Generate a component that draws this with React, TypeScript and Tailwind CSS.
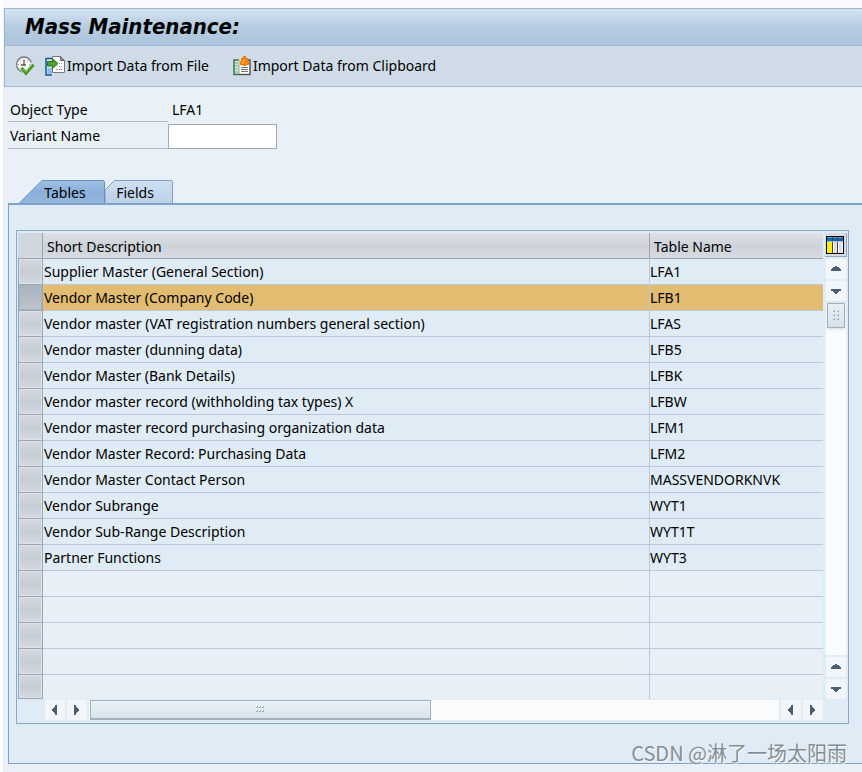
import { ReactNode, useState } from "react";

const tables = [
  { description: "Supplier Master (General Section)", name: "LFA1" },
  { description: "Vendor Master (Company Code)", name: "LFB1" },
  {
    description: "Vendor master (VAT registration numbers general section)",
    name: "LFAS",
  },
  { description: "Vendor master (dunning data)", name: "LFB5" },
  { description: "Vendor Master (Bank Details)", name: "LFBK" },
  { description: "Vendor master record (withholding tax types) X", name: "LFBW" },
  {
    description: "Vendor master record purchasing organization data",
    name: "LFM1",
  },
  { description: "Vendor Master Record: Purchasing Data", name: "LFM2" },
  { description: "Vendor Master Contact Person", name: "MASSVENDORKNVK" },
  { description: "Vendor Subrange", name: "WYT1" },
  { description: "Vendor Sub-Range Description", name: "WYT1T" },
  { description: "Partner Functions", name: "WYT3" },
];

const VISIBLE_ROWS = 17;

const ExecuteIcon = () => (
  <svg width="20" height="20" viewBox="0 0 20 20" fill="none">
    <circle cx="9" cy="8.500" r="7.500" fill="#fafafa" stroke="#777" strokeWidth="1.300" />
    <path d="M9 3.500v6M6 9h5" stroke="#555" strokeWidth="1.300" />
    <path d="M3 8.500h1M14 8.500h1M5 4.500l1 1M13 4.500l-1 1M5 12.500l1-1" stroke="#888" />
    <path d="M7 12.500l4 4.500 7-9" stroke="#e4ecef" strokeWidth="4.500" />
    <path d="M6.500 12l4.500 5.500L18.500 8.500" stroke="#3f8f1d" strokeWidth="3" />
    <path d="M7 12.500l4 4 6.500-8" stroke="#7cc243" strokeWidth="1" />
  </svg>
);

const ImportFileIcon = () => (
  <svg width="20" height="20" viewBox="0 0 20 20" fill="none">
    <path d="M1 3h8v16H1z" fill="#d9e8f4" />
    <path d="M7 2.500H1v16.500h6" stroke="#0a5c94" strokeWidth="1.500" />
    <path d="M2.500 12H7v6H2.500z" fill="#8fbbe0" />
    <path d="M7.500 0.500h8l4 4V16.500H7.500z" fill="#fff" stroke="#777" />
    <path d="M15.500 0.500v4h4z" fill="#999" stroke="#666" />
    <path d="M14 7.500h1M16 7.500h1M14 10.500h1M16 10.500h1M11 13.500h2M14 13.500h3" stroke="#999" />
    <path
      d="M2.500 5.500h5V3L13 7.500 7.500 12.500V10h-5z"
      fill="#4fa02d"
      stroke="#2c741b"
    />
  </svg>
);

const ImportClipboardIcon = () => (
  <svg width="18" height="20" viewBox="0 0 18 20" fill="none">
    <path d="M1 4h5v15H1z" fill="#d5ead6" />
    <path d="M6 4H1v14.500h5" stroke="#34764b" strokeWidth="1.500" />
    <path d="M2 7h3M2 10h3M2 13h3M2 16h3" stroke="#72b184" />
    <path d="M6 4h11v14H6z" fill="#fff" />
    <path d="M15 4h2v14.500H6" stroke="#555" strokeWidth="1.500" />
    <path d="M6 4v14" stroke="#999" />
    <path d="M8 11.500h7M8 13.500h7M8 15.500h7" stroke="#777" />
    <path
      d="M10.500 0.500h2v2h2v3h1v3h-3v1h-2v-1h-3v-3h1v-3h2z"
      fill="#ff8a12"
      stroke="#f07000"
    />
    <path d="M10 4.500h2M9 6.500h2" stroke="#ffc060" />
  </svg>
);

const LayoutIcon = () => (
  <svg width="18" height="18" viewBox="0 0 18 18" shapeRendering="crispEdges">
    <path d="M0 0h18v18H0z" fill="#000" />
    <path d="M1 1h16v16H1z" fill="#fff" />
    <path d="M1 1h16v1H1z" fill="#4aa0d8" />
    <path d="M1 2h16v3H1z" fill="#1764ac" />
    <path d="M1 6h5v11H1z" fill="#ffee00" />
    <path d="M8 6h3v11H8zM13 6h3v11h-3z" fill="#dcdfe8" />
    <path d="M6 1h1v16H6zM11 1h1v16h-1z" fill="#444" />
    <path d="M1 5h16v1H1z" fill="#9fc3e0" />
  </svg>
);

const arrows = {
  up: "M5 3h2v1h2v1h1v1h1v2H1V6h1V5h1V4h2z",
  down: "M1 4h10v2H9v1H8v1H7v1H5V8H4V7H3V6H1z",
  left: "M8 1v10H6V9H5V8H4V7H3V5h1V4h1V3h1V1z",
  right: "M3 1v10h2V9h1V8h1V7h1V5H7V4H6V3H5V1z",
};

const ScrollButton = ({
  direction,
  label,
}: {
  direction: keyof typeof arrows;
  label: string;
}) => (
  <button
    type="button"
    aria-label={label}
    className="flex h-5 w-5 shrink-0 items-center justify-center bg-[#f2f6fb]"
  >
    <svg width="12" height="12" viewBox="0 0 12 12" shapeRendering="crispEdges">
      <path d={arrows[direction]} fill="#4a6072" />
    </svg>
  </button>
);

const Grip = ({ rows }: { rows: number }) => {
  const columns = rows === 3 ? 2 : 3;
  const step = rows === 3 ? 4 : 3;

  return (
    <svg
      width={columns === 2 ? 6 : 9}
      height={rows * 4 - 1}
      shapeRendering="crispEdges"
    >
      {Array.from({ length: rows }).map((_, row) =>
        Array.from({ length: columns }).map((_, col) => (
          <g key={`${row}-${col}`}>
            <rect x={col * step} y={row * 4} width="2" height="2" fill="#9fb0be" />
            <rect x={col * step} y={row * 4} width="1" height="1" fill="#fff" />
          </g>
        ))
      )}
    </svg>
  );
};

const ToolbarButton = ({
  icon,
  children,
}: {
  icon: ReactNode;
  children: ReactNode;
}) => (
  <button type="button" className="flex items-center gap-0.5 whitespace-nowrap">
    {icon}
    {children}
  </button>
);

const TabStrip = () => (
  <div role="tablist" className="ml-[11px] flex h-[23px]">
    <button
      type="button"
      role="tab"
      aria-selected="true"
      className="relative h-[23px] w-[86px] pt-0.5 pl-1.5"
    >
      <svg className="absolute inset-0" width="86" height="23">
        <defs>
          <linearGradient id="activeTab" x1="0" y1="0" x2="0" y2="1">
            <stop offset="0" stopColor="#9dbfe2" />
            <stop offset="0.5" stopColor="#8bb0da" />
            <stop offset="1" stopColor="#93b6dd" />
          </linearGradient>
        </defs>
        <path
          d="M0.500 23L22 1.500Q23 0.500 24 0.500H84.500L85.500 1.500V23"
          fill="url(#activeTab)"
          stroke="#6690bd"
        />
      </svg>
      <span className="relative">Tables</span>
    </button>
    <button
      type="button"
      role="tab"
      aria-selected="false"
      className="relative h-[23px] w-[68px] pt-0.5 pr-2"
    >
      <svg className="absolute inset-0" width="68" height="23">
        <defs>
          <linearGradient id="idleTab" x1="0" y1="0" x2="0" y2="1">
            <stop offset="0" stopColor="#cfe0f0" />
            <stop offset="1" stopColor="#b9d0e8" />
          </linearGradient>
        </defs>
        <path
          d="M0 23V10L9.500 0.500H66.500L67.500 1.500V23"
          fill="url(#idleTab)"
          stroke="#7f9fc4"
        />
      </svg>
      <span className="relative">Fields</span>
    </button>
  </div>
);

const TablesGrid = () => {
  const [selected, setSelected] = useState(1);
  const rows = Array.from({ length: VISIBLE_ROWS }, (_, i) => tables[i]);

  return (
    <div className="border border-[#8aa9cd] px-px pt-0.5 pb-0.5">
      <div className="flex gap-0.5">
        <table className="min-w-0 flex-1 table-fixed border-separate border-spacing-0">
          <colgroup>
            <col className="w-[25px]" />
            <col />
            <col className="w-[173px]" />
          </colgroup>
          <thead>
            <tr className="h-[26px] bg-linear-to-b from-[#dfe2e7] via-[#cdd2d9] to-[#d8dce2] text-left">
              <th className="border-r border-b border-[#9aa5b5] bg-[#d0d7df] p-0" />
              <th className="border-r border-b border-[#9aa5b5] p-0 pt-0.5 pl-1 font-normal">
                Short Description
              </th>
              <th className="border-b border-[#9aa5b5] p-0 pt-0.5 pl-1 font-normal">
                Table Name
              </th>
            </tr>
          </thead>
          <tbody>
            {rows.map((row, i) => {
              const isLast = i === VISIBLE_ROWS - 1;
              return (
                <tr
                  key={i}
                  className={
                    i === selected
                      ? "bg-[#e2bc70]"
                      : row
                        ? "bg-[#dfebf5]"
                        : "bg-[#e8eff7]"
                  }
                >
                  <td className="border-x border-b border-[#9aa5b5] p-0">
                    <button
                      type="button"
                      aria-label={`Select row ${i + 1}`}
                      onClick={() => setSelected(i)}
                      className={
                        i === selected
                          ? "block h-[25px] w-full border border-[#aab4bd] bg-linear-to-b from-[#a9b3bd] to-[#bcc5cd]"
                          : isLast
                            ? "block h-[23px] w-full border border-[#dde2e9] bg-linear-to-b from-[#d3d8df] via-[#c6cdd6] to-[#d3d8df]"
                            : "block h-[25px] w-full border border-[#dde2e9] bg-linear-to-b from-[#d3d8df] via-[#c6cdd6] to-[#d3d8df]"
                      }
                    />
                  </td>
                  <td
                    className={
                      isLast
                        ? "truncate border-r border-[#bcc7d7] p-0 pl-px"
                        : "truncate border-r border-b border-[#bcc7d7] p-0 pl-px"
                    }
                  >
                    {row?.description}
                  </td>
                  <td
                    className={isLast ? "p-0" : "border-b border-[#bcc7d7] p-0"}
                  >
                    {row?.name}
                  </td>
                </tr>
              );
            })}
          </tbody>
        </table>

        <div className="flex w-[22px] flex-col items-center gap-0.5">
          <button
            type="button"
            aria-label="Table settings"
            className="flex h-6 w-full items-center justify-center border-r border-b border-[#9aa5b5] bg-[#d8dce2] pr-px"
          >
            <LayoutIcon />
          </button>
          <ScrollButton direction="up" label="Scroll up" />
          <ScrollButton direction="down" label="Scroll down" />
          <div className="flex w-full flex-1 flex-col items-center border-x border-[#edf2f8] bg-[#fafbfc]">
            <div className="flex h-[25px] w-[18px] items-center justify-center border border-[#a0b0bf] bg-linear-to-b from-[#e9f1f7] to-[#d3e0ea] shadow-sm">
              <Grip rows={3} />
            </div>
          </div>
          <ScrollButton direction="up" label="Previous row" />
          <ScrollButton direction="down" label="Next row" />
        </div>
      </div>

      <div className="mr-6 ml-[27px] flex h-[22px] items-center gap-0.5">
        <ScrollButton direction="left" label="Scroll left" />
        <ScrollButton direction="right" label="Scroll right" />
        <div className="h-5 flex-1 bg-[#fafbfc] pl-px">
          <div className="flex h-5 w-[341px] items-center justify-center border border-b-2 border-[#a0b0bd] bg-linear-to-b from-[#eaf1f7] to-[#d8e4ec]">
            <Grip rows={2} />
          </div>
        </div>
        <ScrollButton direction="left" label="Previous column" />
        <ScrollButton direction="right" label="Next column" />
      </div>
    </div>
  );
};

export default function App() {
  return (
    <div className="relative min-h-screen border-l-[3px] border-white bg-[#e9f0f7] font-['Noto_Sans',sans-serif] text-sm leading-5 text-black">
      <div className="h-2 bg-[#f8f9fd]" />
      <header className="ml-px border-y border-l border-[#9db5cf] bg-linear-to-b from-[#d5e3f0] via-[#b6cce1] to-[#abc3dc] pl-5">
        <h1 className="h-9 font-['DejaVu_Sans_Condensed','DejaVu_Sans',sans-serif] text-[22px] leading-9 font-bold italic">
          Mass Maintenance:
        </h1>
      </header>
      <div className="ml-px flex h-[41px] items-center border-b border-l border-[#9db5cf] bg-[#cfdce8] pl-2.5">
        <button type="button" aria-label="Execute" className="mr-2.5">
          <ExecuteIcon />
        </button>
        <ToolbarButton icon={<ImportFileIcon />}>
          Import Data from File
        </ToolbarButton>
        <div className="w-6" />
        <ToolbarButton icon={<ImportClipboardIcon />}>
          Import Data from Clipboard
        </ToolbarButton>
      </div>

      <div className="ml-[5px] pt-[9px]">
        <div className="flex">
          <span className="h-[26px] w-40 border-b border-[#b4bbc3] pl-0.5 leading-7">
            Object Type
          </span>
          <span className="h-[26px] pl-1 leading-7">LFA1</span>
        </div>
        <div className="flex items-end">
          <label
            htmlFor="variant"
            className="h-[27px] w-40 border-b border-[#b4bbc3] pl-0.5 leading-7"
          >
            Variant Name
          </label>
          <input
            id="variant"
            type="text"
            className="h-[25px] w-[109px] border border-[#a5a9ad] bg-white px-1 outline-none"
          />
        </div>
      </div>

      <main className="mt-[31px] ml-[5px]">
        <TabStrip />
        <section className="border-t-2 border-b border-l border-[#7ea2cb] bg-[#dfebf5] pt-[25px] pr-[13px] pb-[39px] pl-[7px]">
          <TablesGrid />
        </section>
      </main>
      <div className="absolute right-[15px] bottom-[5px] font-['Noto_Sans_CJK_SC',sans-serif] text-xl leading-7 font-normal text-[#868e95] text-shadow-[1px_1px_0_#f4f8fb]">
        CSDN @淋了一场太阳雨
      </div>
    </div>
  );
}
